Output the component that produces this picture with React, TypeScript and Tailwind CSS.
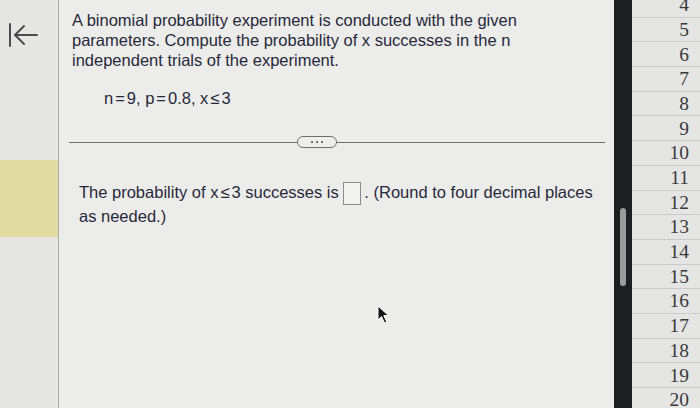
import React from 'react';

const rows = [4, 5, 6, 7, 8, 9, 10, 11, 12, 13, 14, 15, 16, 17, 18, 19, 20];

const BackIcon: React.FC = () => (
    <svg width="32" height="26" viewBox="0 0 32 26" fill="none" stroke="#4b4b4e" strokeWidth="2" strokeLinecap="round">
        <line x1="2" y1="2" x2="2" y2="24" />
        <line x1="7" y1="13" x2="29" y2="13" />
        <polyline points="16,4 7,13 16,22" fill="none" strokeLinejoin="round" />
    </svg>
);

const Cursor: React.FC = () => (
    <svg width="14" height="20" viewBox="0 0 14 20">
        <path d="M1 1 L1 15 L4.5 11.5 L7.5 18 L9.8 17 L6.8 10.6 L11.5 10.6 Z" fill="#111" stroke="#fff" strokeWidth="1" strokeLinejoin="round" />
    </svg>
);

// tight operator spacing like the math renderer
const Op: React.FC<{ children: React.ReactNode }> = ({ children }) => (
    <span className="mx-[2px]">{children}</span>
);

const App: React.FC = () => {
    return (
        <div className="relative flex h-[408px] w-[700px] overflow-hidden bg-[#ececeb] font-['Liberation_Sans',Arial,sans-serif] text-[#27293a]">
            {/* left rail */}
            <div className="flex w-[59px] shrink-0 flex-col border-r border-[#adadad] bg-[#e6e6e5]">
                <div className="pl-[8px] pt-[22px]">
                    <BackIcon />
                </div>
                <div className="mt-[112px] h-[77px] w-full bg-[#e3dca2]" />
            </div>

            {/* question */}
            <div className="flex w-[555px] shrink-0 flex-col pt-[10px] text-[16.5px]">
                <p className="pl-[13px] leading-[20px]">
                    <span className="block">A binomial probability experiment is conducted with the given</span>
                    <span className="block">parameters. Compute the probability of x successes in the n</span>
                    <span className="block">independent trials of the experiment.</span>
                </p>
                <p className="mt-[18px] pl-[45px] leading-[20px]">
                    n<Op>=</Op>9, p<Op>=</Op>0.8, x<Op>≤</Op>3
                </p>

                <div className="mt-[28px] ml-[10px] mr-[9px] flex items-center">
                    <div className="h-px w-[228px] bg-[#707070]" />
                    <div className="flex h-[12px] w-[40px] items-center justify-center gap-[3px] rounded-full border-[1.5px] border-[#6f6f6f] bg-[#eeeeed]">
                        <span className="h-[2px] w-[2px] rounded-full bg-[#444]" />
                        <span className="h-[2px] w-[2px] rounded-full bg-[#444]" />
                        <span className="h-[2px] w-[2px] rounded-full bg-[#444]" />
                    </div>
                    <div className="h-px flex-1 bg-[#707070]" />
                </div>

                <p className="mt-[33px] pl-[20px] leading-[23px]">
                    The probability of x<Op>≤</Op>3 successes is{' '}
                    <span className="inline-block h-[23px] w-[18px] border border-[#8c8c8c] bg-[#f2f2f1] align-middle" />
                    <span className="ml-[3px]">. (Round to four decimal places</span>
                    <br />
                    as needed.)
                </p>
            </div>

            {/* scroll bar */}
            <div className="flex w-[18px] shrink-0 flex-col items-center bg-[#1c1e21]">
                <div className="mt-[208px] h-[78px] w-[6px] rounded-full bg-[#9b9b9c]" />
            </div>

            {/* line numbers */}
            <div className="flex flex-1 flex-col bg-[#e5e5e3]">
                <div className="-mt-[7px]">
                    {rows.map((n) => (
                        <div
                            key={n}
                            className="flex h-[24.7px] items-center justify-end border-b border-[#cacac7] pr-[11px] font-['Liberation_Serif','Times_New_Roman',serif] text-[19.5px] text-[#3a3a3c]"
                        >
                            {n}
                        </div>
                    ))}
                </div>
            </div>

            <div className="absolute left-[377px] top-[305px]">
                <Cursor />
            </div>
        </div>
    );
};

export default App;
